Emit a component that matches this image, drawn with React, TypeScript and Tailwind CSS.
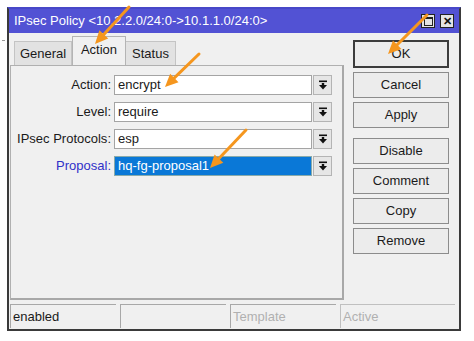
import React from "react";

const fields: [string, string][] = [
  ["Action", "encrypt"],
  ["Level", "require"],
  ["IPsec Protocols", "esp"],
  ["Proposal", "hq-fg-proposal1"],
];

const buttons: string[] = ["OK", "Cancel", "Apply", "Disable", "Comment", "Copy", "Remove"];

const arrows: [number, number, number, number][] = [
  [129, 7, 95, 44],
  [199, 54, 165, 87],
  [427, 15, 388, 54],
  [246, 130, 210, 168],
];

const DropIcon = () => (
  <svg width="10" height="10" viewBox="0 0 10 10">
    <rect x="1" y="0.5" width="8" height="1.6" fill="#111" />
    <rect x="3.8" y="3" width="2.4" height="2" fill="#111" />
    <polygon points="1,5 9,5 5,9.5" fill="#111" />
  </svg>
);

function Arrow({ x1, y1, x2, y2 }: { x1: number; y1: number; x2: number; y2: number }) {
  const dx = x2 - x1;
  const dy = y2 - y1;
  const len = Math.sqrt(dx * dx + dy * dy);
  const ux = dx / len;
  const uy = dy / len;
  const bx = x2 - ux * 13;
  const by = y2 - uy * 13;
  const px = -uy * 6;
  const py = ux * 6;
  return (
    <g>
      <line x1={x1} y1={y1} x2={bx} y2={by} stroke="#f5961e" strokeWidth="3" strokeLinecap="round" />
      <polygon points={`${x2},${y2} ${bx + px},${by + py} ${bx - px},${by - py}`} fill="#f5961e" />
    </g>
  );
}

export default function App() {
  return (
    <div
      className="relative w-[474px] h-[341px] bg-white overflow-hidden text-[13px] text-[#1a1a1a]"
      style={{ fontFamily: '"Liberation Sans", Arial, sans-serif' }}
    >
      <div className="absolute left-[2px] top-[40px] w-[3px] h-px bg-[#999]" />
      <div className="ml-[7px] pt-[7px]">
        <div className="w-[454px] h-[324px] border-2 border-[#3a3a3a] border-t-[#4848c8] bg-[#f0f0f0] flex flex-col">
          {/* title bar */}
          <div className="h-[24px] bg-[#5252d4] flex items-center pl-[5px] pr-[5px] text-white">
            <span className="flex-1 whitespace-nowrap">IPsec Policy &lt;10.2.2.0/24:0-&gt;10.1.1.0/24:0&gt;</span>
            <div className="w-[14px] h-[14px] bg-[#e4e4e4] border border-[#222] flex items-center justify-center">
              <div className="w-[9px] h-[9px] border border-[#222] border-t-2" />
            </div>
            <div className="w-[14px] h-[14px] ml-[5px] bg-[#e4e4e4] border border-[#222] flex items-center justify-center text-[#111] font-bold text-[11px] leading-none">
              ✕
            </div>
          </div>

          <div className="flex flex-1">
            {/* left: tabs + panel */}
            <div className="w-[334px] ml-px flex flex-col">
              <div className="h-[32px] flex items-end pl-[4px]">
                <div className="h-[24px] w-[58px] bg-[#e2e2e2] border border-b-0 border-[#c4c4c4] flex items-center justify-center">
                  General
                </div>
                <div className="h-[29px] w-[54px] bg-[#f0f0f0] border border-b-0 border-[#b4b4b4] flex items-center justify-center pb-[3px]">
                  Action
                </div>
                <div className="h-[24px] w-[50px] bg-[#e2e2e2] border border-b-0 border-l-0 border-[#c4c4c4] flex items-center justify-center">
                  Status
                </div>
              </div>
              <div className="h-[235px] border border-[#b0b0b0] border-r-2 border-b-2 border-r-[#a8a8a8] border-b-[#a8a8a8] flex flex-col gap-[7px] pt-[9px]">
                {fields.map(([label, value]) => {
                  const sel = label === "Proposal";
                  return (
                    <div key={label} className="flex items-center h-[20px]">
                      <div
                        className={
                          "w-[103px] text-right pr-[3px] whitespace-nowrap " +
                          (sel ? "text-[#3030c8]" : "text-[#1a1a1a]")
                        }
                      >
                        {label}:
                      </div>
                      <div
                        className={
                          "w-[198px] h-[20px] border flex items-center pl-[3px] " +
                          (sel ? "bg-[#0a78d7] border-[#8aa] text-white" : "bg-white border-[#a4a4a4]")
                        }
                      >
                        {value}
                      </div>
                      <div className="w-[19px] h-[20px] ml-px bg-[#e6e6e6] border border-[#b4b4b4] flex items-center justify-center">
                        <DropIcon />
                      </div>
                    </div>
                  );
                })}
              </div>
            </div>

            {/* right: buttons */}
            <div className="ml-[9px] pt-[7px] flex flex-col">
              {buttons.map((b, i) => (
                <div
                  key={b}
                  className={
                    "w-[96px] h-[26px] flex items-center justify-center bg-[#ececec] " +
                    (i === 0 ? "border-2 border-[#3c3c3c] h-[28px]" : "border border-[#8c8c8c]") +
                    (i === 3 ? " mt-[10px]" : i === 0 ? "" : " mt-[4px]")
                  }
                >
                  {b}
                </div>
              ))}
            </div>
          </div>

          {/* status bar */}
          <div className="h-[24px] mb-[1px] mt-[3px] flex gap-[4px] pl-px pr-[4px]">
            <div className="w-[106px] border-t border-l border-[#a8a8a8] flex items-center pl-[2px]">enabled</div>
            <div className="w-[106px] border-t border-l border-[#a8a8a8]" />
            <div className="w-[106px] border-t border-l border-[#a8a8a8] flex items-center pl-[2px] text-[#b0b0b0]">Template</div>
            <div className="flex-1 border-t border-l border-[#c0c0c0] flex items-center pl-[2px] text-[#b0b0b0]">Active</div>
          </div>
        </div>
      </div>

      <svg className="absolute left-0 top-0 pointer-events-none" width="474" height="341">
        {arrows.map(([a, b, c, d], i) => (
          <Arrow key={i} x1={a} y1={b} x2={c} y2={d} />
        ))}
      </svg>
    </div>
  );
}
